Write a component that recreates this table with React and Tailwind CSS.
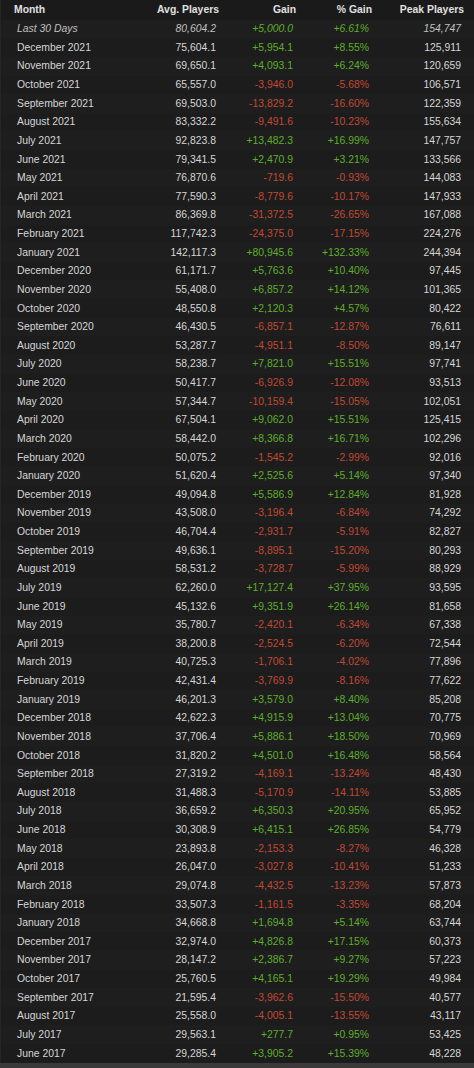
const rows = [
  ["December 2021", "75,604.1", "+5,954.1", "+8.55%", "125,911"],
  ["November 2021", "69,650.1", "+4,093.1", "+6.24%", "120,659"],
  ["October 2021", "65,557.0", "-3,946.0", "-5.68%", "106,571"],
  ["September 2021", "69,503.0", "-13,829.2", "-16.60%", "122,359"],
  ["August 2021", "83,332.2", "-9,491.6", "-10.23%", "155,634"],
  ["July 2021", "92,823.8", "+13,482.3", "+16.99%", "147,757"],
  ["June 2021", "79,341.5", "+2,470.9", "+3.21%", "133,566"],
  ["May 2021", "76,870.6", "-719.6", "-0.93%", "144,083"],
  ["April 2021", "77,590.3", "-8,779.6", "-10.17%", "147,933"],
  ["March 2021", "86,369.8", "-31,372.5", "-26.65%", "167,088"],
  ["February 2021", "117,742.3", "-24,375.0", "-17.15%", "224,276"],
  ["January 2021", "142,117.3", "+80,945.6", "+132.33%", "244,394"],
  ["December 2020", "61,171.7", "+5,763.6", "+10.40%", "97,445"],
  ["November 2020", "55,408.0", "+6,857.2", "+14.12%", "101,365"],
  ["October 2020", "48,550.8", "+2,120.3", "+4.57%", "80,422"],
  ["September 2020", "46,430.5", "-6,857.1", "-12.87%", "76,611"],
  ["August 2020", "53,287.7", "-4,951.1", "-8.50%", "89,147"],
  ["July 2020", "58,238.7", "+7,821.0", "+15.51%", "97,741"],
  ["June 2020", "50,417.7", "-6,926.9", "-12.08%", "93,513"],
  ["May 2020", "57,344.7", "-10,159.4", "-15.05%", "102,051"],
  ["April 2020", "67,504.1", "+9,062.0", "+15.51%", "125,415"],
  ["March 2020", "58,442.0", "+8,366.8", "+16.71%", "102,296"],
  ["February 2020", "50,075.2", "-1,545.2", "-2.99%", "92,016"],
  ["January 2020", "51,620.4", "+2,525.6", "+5.14%", "97,340"],
  ["December 2019", "49,094.8", "+5,586.9", "+12.84%", "81,928"],
  ["November 2019", "43,508.0", "-3,196.4", "-6.84%", "74,292"],
  ["October 2019", "46,704.4", "-2,931.7", "-5.91%", "82,827"],
  ["September 2019", "49,636.1", "-8,895.1", "-15.20%", "80,293"],
  ["August 2019", "58,531.2", "-3,728.7", "-5.99%", "88,929"],
  ["July 2019", "62,260.0", "+17,127.4", "+37.95%", "93,595"],
  ["June 2019", "45,132.6", "+9,351.9", "+26.14%", "81,658"],
  ["May 2019", "35,780.7", "-2,420.1", "-6.34%", "67,338"],
  ["April 2019", "38,200.8", "-2,524.5", "-6.20%", "72,544"],
  ["March 2019", "40,725.3", "-1,706.1", "-4.02%", "77,896"],
  ["February 2019", "42,431.4", "-3,769.9", "-8.16%", "77,622"],
  ["January 2019", "46,201.3", "+3,579.0", "+8.40%", "85,208"],
  ["December 2018", "42,622.3", "+4,915.9", "+13.04%", "70,775"],
  ["November 2018", "37,706.4", "+5,886.1", "+18.50%", "70,969"],
  ["October 2018", "31,820.2", "+4,501.0", "+16.48%", "58,564"],
  ["September 2018", "27,319.2", "-4,169.1", "-13.24%", "48,430"],
  ["August 2018", "31,488.3", "-5,170.9", "-14.11%", "53,885"],
  ["July 2018", "36,659.2", "+6,350.3", "+20.95%", "65,952"],
  ["June 2018", "30,308.9", "+6,415.1", "+26.85%", "54,779"],
  ["May 2018", "23,893.8", "-2,153.3", "-8.27%", "46,328"],
  ["April 2018", "26,047.0", "-3,027.8", "-10.41%", "51,233"],
  ["March 2018", "29,074.8", "-4,432.5", "-13.23%", "57,873"],
  ["February 2018", "33,507.3", "-1,161.5", "-3.35%", "68,204"],
  ["January 2018", "34,668.8", "+1,694.8", "+5.14%", "63,744"],
  ["December 2017", "32,974.0", "+4,826.8", "+17.15%", "60,373"],
  ["November 2017", "28,147.2", "+2,386.7", "+9.27%", "57,223"],
  ["October 2017", "25,760.5", "+4,165.1", "+19.29%", "49,984"],
  ["September 2017", "21,595.4", "-3,962.6", "-15.50%", "40,577"],
  ["August 2017", "25,558.0", "-4,005.1", "-13.55%", "43,117"],
  ["July 2017", "29,563.1", "+277.7", "+0.95%", "53,425"],
  ["June 2017", "29,285.4", "+3,905.2", "+15.39%", "48,228"],
];

const cols = "grid grid-cols-[1fr_86px_77px_76px_92px] items-center";

const tone = (v) => (v.startsWith("-") ? "text-[#c04a33]" : "text-[#5fae2b]");

const App = () => (
  <div className="min-h-screen bg-[#1c1c1d] font-['Liberation_Sans',Arial,sans-serif] text-[10.4px] text-[#d6d6d6]">
    <div className="border-l border-[#262627]">
      <div className={`${cols} h-[19.7px] bg-[#1a1a1b] pl-[13px] pr-[10px] font-bold text-[#e0e0e0]`}>
        <div>Month</div>
        <div className="text-right">Avg. Players</div>
        <div className="text-right">Gain</div>
        <div className="text-right">% Gain</div>
        <div className="text-right">Peak Players</div>
      </div>
      <div className={`${cols} h-[18.64px] bg-[#1e1e1f] pl-[16px] pr-[13px] italic text-[#c0c0c0]`}>
        <div>Last 30 Days</div>
        <div className="text-right">80,604.2</div>
        <div className="text-right text-[#5fae2b]">+5,000.0</div>
        <div className="text-right text-[#5fae2b]">+6.61%</div>
        <div className="text-right">154,747</div>
      </div>
      {rows.map(([month, avg, gain, pct, peak], i) => (
        <div
          key={month}
          className={`${cols} h-[18.64px] pl-[16px] pr-[13px] ${i % 2 === 0 ? "bg-[#1c1c1d]" : "bg-[#1e1e1f]"}`}
        >
          <div>{month}</div>
          <div className="text-right">{avg}</div>
          <div className={`text-right ${tone(gain)}`}>{gain}</div>
          <div className={`text-right ${tone(pct)}`}>{pct}</div>
          <div className="text-right">{peak}</div>
        </div>
      ))}
    </div>
    <div className="h-[5px] bg-[#3a3a3b]" />
  </div>
);

export default App;
